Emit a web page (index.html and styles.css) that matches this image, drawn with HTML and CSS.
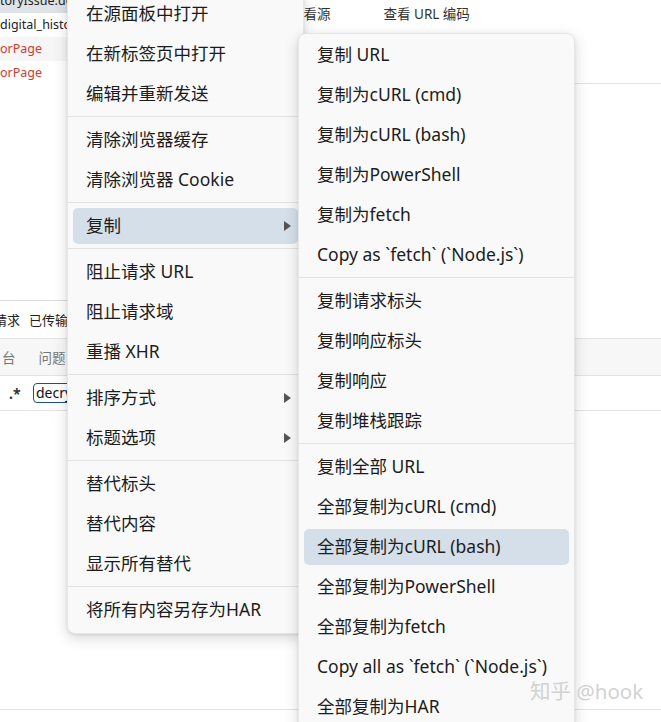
FILE: index.html
```html
<!doctype html>
<html lang="zh-CN">
  <head>
    <meta charset="UTF-8" />
    <meta name="viewport" content="width=device-width, initial-scale=1.0" />
    <title>Network context menu</title>
    <link rel="stylesheet" href="styles.css">
  </head>
  <body>
    <div id="devtools">
      <div class="network">
        <div class="req-list">
          <div class="req-row selected">toryIssue.do</div>
          <div class="req-row">digital_histo</div>
          <div class="req-row error alt">orPage</div>
          <div class="req-row error">orPage</div>
          <div class="req-spacer"></div>
          <div class="status-bar"><span class="cut">请求</span><span class="status-item">已传输</span></div>
        </div>
        <div class="detail">
          <div class="detail-tabs">
            <span class="detail-tab">查看源</span>
            <span class="detail-tab">查看 URL 编码</span>
          </div>
        </div>
      </div>

      <div class="drawer-tabs">
        <span class="drawer-tab first">台</span>
        <span class="drawer-tab">问题</span>
      </div>

      <div class="filter-bar">
        <span class="regex">.*</span>
        <span class="filter-input">decry</span>
      </div>

      <div class="console"></div>
    </div>

    <div id="context-menu" class="menu">
      <div class="menu-item">在源面板中打开</div>
      <div class="menu-item">在新标签页中打开</div>
      <div class="menu-item">编辑并重新发送</div>
      <div class="menu-sep"></div>
      <div class="menu-item">清除浏览器缓存</div>
      <div class="menu-item">清除浏览器 Cookie</div>
      <div class="menu-sep"></div>
      <div class="menu-item active has-sub">复制</div>
      <div class="menu-sep"></div>
      <div class="menu-item">阻止请求 URL</div>
      <div class="menu-item">阻止请求域</div>
      <div class="menu-item">重播 XHR</div>
      <div class="menu-sep"></div>
      <div class="menu-item has-sub">排序方式</div>
      <div class="menu-item has-sub">标题选项</div>
      <div class="menu-sep"></div>
      <div class="menu-item">替代标头</div>
      <div class="menu-item">替代内容</div>
      <div class="menu-item">显示所有替代</div>
      <div class="menu-sep"></div>
      <div class="menu-item">将所有内容另存为HAR</div>
    </div>

    <div id="copy-menu" class="menu">
      <div class="menu-item">复制 URL</div>
      <div class="menu-item">复制为cURL (cmd)</div>
      <div class="menu-item">复制为cURL (bash)</div>
      <div class="menu-item">复制为PowerShell</div>
      <div class="menu-item">复制为fetch</div>
      <div class="menu-item">Copy as `fetch` (`Node.js`)</div>
      <div class="menu-sep"></div>
      <div class="menu-item">复制请求标头</div>
      <div class="menu-item">复制响应标头</div>
      <div class="menu-item">复制响应</div>
      <div class="menu-item">复制堆栈跟踪</div>
      <div class="menu-sep"></div>
      <div class="menu-item">复制全部 URL</div>
      <div class="menu-item">全部复制为cURL (cmd)</div>
      <div class="menu-item active">全部复制为cURL (bash)</div>
      <div class="menu-item">全部复制为PowerShell</div>
      <div class="menu-item">全部复制为fetch</div>
      <div class="menu-item">Copy all as `fetch` (`Node.js`)</div>
      <div class="menu-item">全部复制为HAR</div>
    </div>

    <div class="watermark">知乎 @hook</div>
  </body>
</html>
```

FILE: styles.css
```css
body {
  margin: 0;
  padding: 0;
  font-family: 'Noto Sans', 'Noto Sans CJK SC', sans-serif;
  background: #fff;
  color: #1f1f1f;
  overflow: hidden;
  width: 661px;
  height: 722px;
  position: relative;
}

#devtools {
  display: flex;
  flex-direction: column;
  height: 722px;
  font-size: 13px;
}

.network {
  display: flex;
  height: 339px;
  border-bottom: 1px solid #e3e3e3;
  box-sizing: border-box;
}

.req-list {
  width: 240px;
  display: flex;
  flex-direction: column;
  overflow: hidden;
}

.req-row {
  height: 24px;
  line-height: 24px;
  white-space: nowrap;
  color: #222;
  font-size: 12.5px;
}

.req-row.selected {
  height: 13px;
  line-height: 2px;
  background: #dfe2e7;
}

.req-row.alt {
  background: #f6f6f6;
}

.req-row.error {
  color: #d23a30;
}

.req-spacer {
  flex: 1;
}

.status-bar {
  height: 37px;
  border-top: 1px solid #dcdcdc;
  display: flex;
  align-items: center;
  white-space: nowrap;
  color: #222;
}

.status-bar .cut {
  margin-left: -6px;
}

.status-item {
  margin-left: 9px;
}

.detail {
  flex: 1;
}

.detail-tabs {
  height: 84px;
  border-bottom: 1px solid #e3e3e3;
  box-sizing: border-box;
  display: flex;
  gap: 53px;
  padding-left: 50px;
  padding-top: 3px;
  color: #333;
  font-size: 13.5px;
}

.drawer-tabs {
  height: 37px;
  background: #f7f7f7;
  border-bottom: 1px solid #e3e3e3;
  box-sizing: border-box;
  display: flex;
  align-items: center;
  color: #777;
  font-size: 13.5px;
}

.drawer-tab.first {
  margin-left: 2px;
  margin-right: 23px;
}

.filter-bar {
  height: 35px;
  border-bottom: 1px solid #e3e3e3;
  box-sizing: border-box;
  display: flex;
  align-items: center;
  font-size: 14px;
}

.regex {
  margin-left: 9px;
  width: 24px;
  font-weight: bold;
  color: #333;
}

.filter-input {
  border: 1px solid #1d4f8f;
  border-radius: 4px;
  height: 18px;
  line-height: 17px;
  padding: 0 40px 0 2px;
  color: #111;
}

.console {
  height: 298px;
  border-bottom: 1px solid #e3e3e3;
}

.menu {
  position: absolute;
  background: #f9f9f9;
  border: 1px solid #e6e6e6;
  border-radius: 8px;
  box-shadow: 0 4px 14px rgba(0, 0, 0, 0.16), 0 1px 3px rgba(0, 0, 0, 0.08);
  font-size: 17.5px;
  color: #1c1c1c;
}

#context-menu {
  left: 67px;
  top: -12px;
  width: 235px;
  padding: 4px 0;
}

#copy-menu {
  left: 298px;
  top: 33px;
  width: 275px;
  padding: 0 0 8px;
  z-index: 2;
}

.menu-item {
  position: relative;
  height: 40px;
  line-height: 40px;
  padding-left: 18px;
  white-space: nowrap;
  z-index: 0;
}

.menu-item.active::before {
  content: '';
  position: absolute;
  left: 5px;
  right: 5px;
  top: 3px;
  bottom: 1px;
  background: #d5dfe9;
  border-radius: 5px;
  z-index: -1;
}

.menu-item.has-sub::after {
  content: '';
  position: absolute;
  right: 12px;
  top: 50%;
  margin-top: -4px;
  border-left: 7px solid #555;
  border-top: 5px solid transparent;
  border-bottom: 5px solid transparent;
}

.menu-sep {
  height: 1px;
  background: #e2e2e2;
  margin: 3px 0 2px;
}

.watermark {
  position: absolute;
  left: 530px;
  top: 675px;
  font-size: 20.5px;
  color: #d2d2d2;
  z-index: 3;
  white-space: nowrap;
}
```
